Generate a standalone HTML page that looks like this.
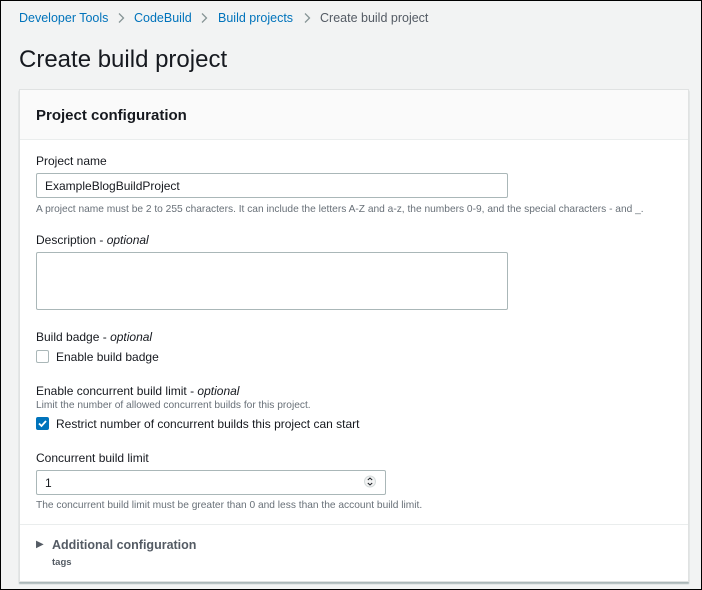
<!DOCTYPE html><html><head><style>
body{margin:0;width:702px;height:590px;overflow:hidden;font-family:"Liberation Sans",sans-serif;}
.f{position:absolute;left:0;top:0;width:700px;height:588px;border:1px solid #000;background:#f2f3f3;}
.a{position:absolute;white-space:nowrap;}
.lnk{color:#0073bb;font-size:12.5px;}
.card{position:absolute;left:18px;top:88px;width:668px;height:491px;background:#fff;border:1px solid #e0e2e2;box-shadow:0 2px 1px #aab7b8;}
.hd{position:absolute;left:0;top:0;width:668px;height:49px;background:#fafafa;border-bottom:1px solid #eaeded;}
.lb{font-size:12px;color:#16191f;}
.ht{font-size:10.2px;color:#687078;}
.in{position:absolute;border:1px solid #aab7b8;border-radius:2px;background:#fff;}
.cb{position:absolute;width:11px;height:11px;border:1px solid #aab7b8;border-radius:2px;}
.ch{position:absolute;top:11px;}
</style></head><body><div class="f">
<div class="a lnk" style="left:18px;top:10px">Developer Tools</div>
<svg class="ch" style="left:116px" width="8" height="12"><path d="M2 1.5L6.5 6L2 10.5" stroke="#879596" stroke-width="1.3" fill="none"/></svg>
<div class="a lnk" style="left:133px;top:10px">CodeBuild</div>
<svg class="ch" style="left:199px" width="8" height="12"><path d="M2 1.5L6.5 6L2 10.5" stroke="#879596" stroke-width="1.3" fill="none"/></svg>
<div class="a lnk" style="left:217px;top:10px">Build projects</div>
<svg class="ch" style="left:302px" width="8" height="12"><path d="M2 1.5L6.5 6L2 10.5" stroke="#879596" stroke-width="1.3" fill="none"/></svg>
<div class="a" style="left:319px;top:10px;color:#545b64;font-size:12.5px">Create build project</div>
<div class="a" style="left:18px;top:45px;font-size:24px;color:#16191f">Create build project</div>
<div class="card">
<div class="hd"></div>
<div class="a" style="left:16px;top:17px;font-size:15px;font-weight:bold;color:#16191f">Project configuration</div>
<div class="a lb" style="left:16px;top:64px">Project name</div>
<div class="in" style="left:16px;top:83px;width:470px;height:23px"></div>
<div class="a lb" style="left:25px;top:89px">ExampleBlogBuildProject</div>
<div class="a ht" style="left:16px;top:114px">A project name must be 2 to 255 characters. It can include the letters A-Z and a-z, the numbers 0-9, and the special characters - and _.</div>
<div class="a lb" style="left:16px;top:143px">Description - <i>optional</i></div>
<div class="in" style="left:16px;top:162px;width:470px;height:56px"></div>
<div class="a lb" style="left:16px;top:240px">Build badge - <i>optional</i></div>
<div class="cb" style="left:16px;top:260px"></div>
<div class="a lb" style="left:36px;top:260px">Enable build badge</div>
<div class="a lb" style="left:16px;top:294px">Enable concurrent build limit - <i>optional</i></div>
<div class="a ht" style="left:16px;top:310px">Limit the number of allowed concurrent builds for this project.</div>
<div class="cb" style="left:16px;top:327px;background:#0073bb;border-color:#0073bb"><svg width="11" height="11" style="position:absolute;left:0;top:0"><path d="M2 5.5L4.5 8L9 3" stroke="#fff" stroke-width="1.8" fill="none"/></svg></div>
<div class="a lb" style="left:36px;top:327px">Restrict number of concurrent builds this project can start</div>
<div class="a lb" style="left:16px;top:361px">Concurrent build limit</div>
<div class="in" style="left:16px;top:380px;width:348px;height:23px"></div>
<div class="a lb" style="left:25px;top:386px">1</div>
<svg class="a" style="left:344px;top:385px" width="12" height="13"><circle cx="6" cy="6.5" r="5.5" fill="#f2f3f3" stroke="#d5dbdb"/><path d="M3.8 5L6 3L8.2 5M3.8 8L6 10L8.2 8" stroke="#16191f" stroke-width="1" fill="none"/></svg>
<div class="a ht" style="left:16px;top:410px">The concurrent build limit must be greater than 0 and less than the account build limit.</div>
<div class="a" style="left:0;top:434px;width:668px;height:1px;background:#eaeded"></div>
<div class="a" style="left:16px;top:449px;font-size:10px;color:#545b64">▶</div>
<div class="a" style="left:32px;top:448px;font-size:12.5px;font-weight:bold;color:#545b64">Additional configuration</div>
<div class="a" style="left:32px;top:467px;font-size:9.5px;font-weight:bold;color:#545b64">tags</div>
</div>
</div></body></html>
